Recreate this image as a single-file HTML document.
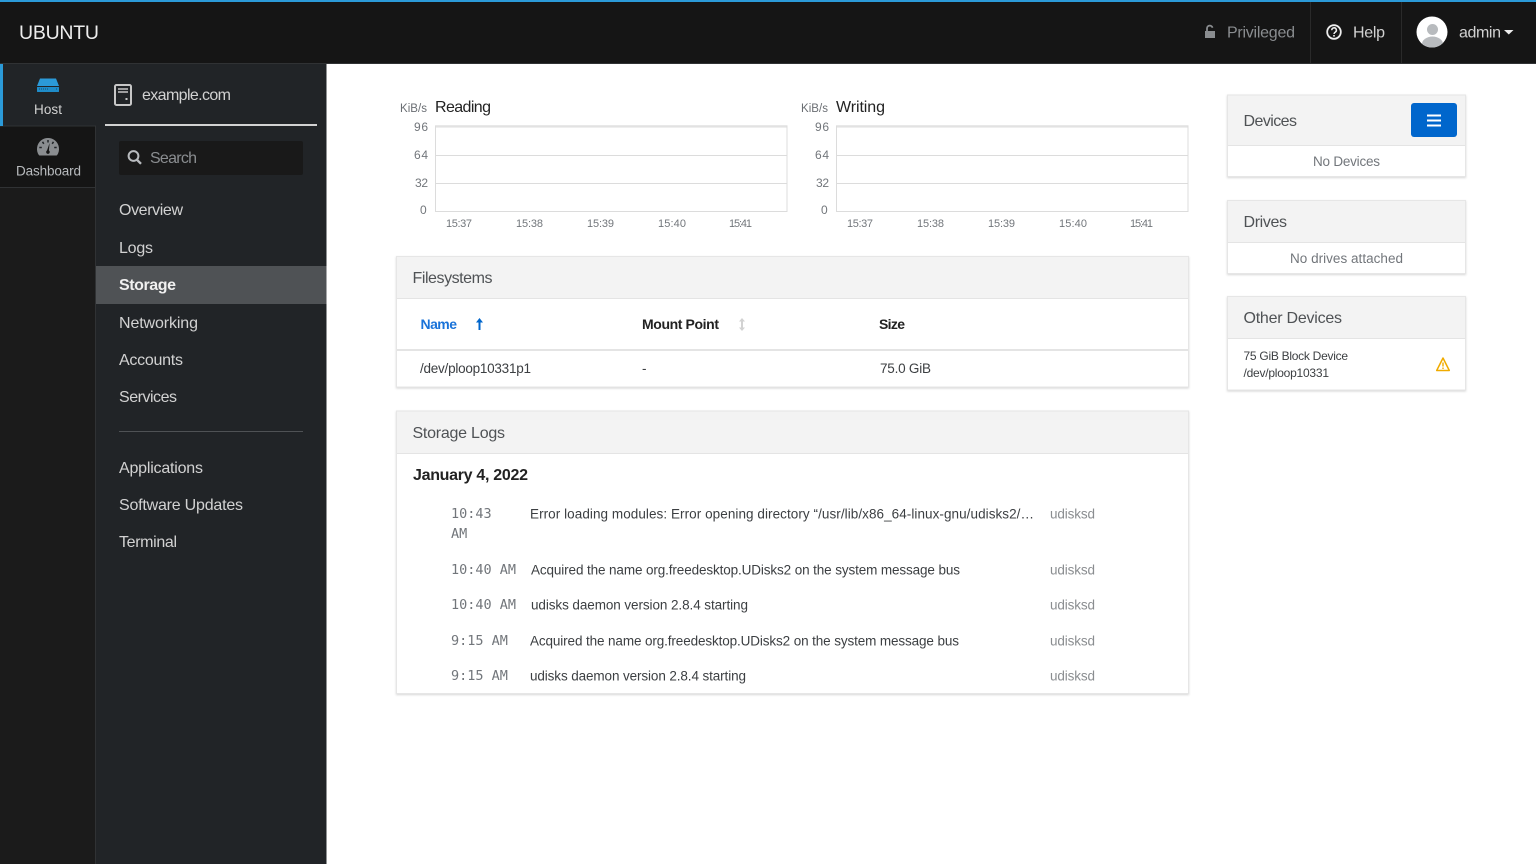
<!DOCTYPE html>
<html><head><meta charset="utf-8"><title>Storage - UBUNTU</title>
<style>
html,body{margin:0;padding:0;background:#fff;width:1536px;height:864px;overflow:hidden}
svg{display:block}
text{font-family:"Liberation Sans",sans-serif;white-space:pre}
.m{font-family:"DejaVu Sans Mono",monospace;font-size:13.500px;fill:#72767b}
.n{font-size:16px;fill:#d2d2d2}
.h{font-size:16px;fill:#4f5255}
.ax{font-size:12px;fill:#72767b}
.tm{font-size:11px;fill:#72767b}
.l{font-size:13.5px;fill:#3c3f42}
.d{font-size:13.5px;fill:#8a8d90}
.c{fill:#fff;stroke:#e6e6e6;stroke-width:1}
.ch{fill:#f3f3f3}
.ln{fill:#e4e4e4}
</style></head><body>
<svg width="1536" height="864" viewBox="0 0 1536 864" xmlns="http://www.w3.org/2000/svg">
<defs>
<filter id="s" x="-2%" y="-5%" width="104%" height="112%"><feDropShadow dx="0" dy="1" stdDeviation="1" flood-color="#000" flood-opacity=".16"/></filter>
</defs>
<rect width="1536" height="864" fill="#fff"/>
<!-- top bar -->
<rect width="1536" height="64" fill="#151515"/>
<rect width="1536" height="2" fill="#2b9ad8"/>
<rect y="63" width="1536" height="1" fill="#303234"/>
<rect x="1310" y="2" width="1" height="61" fill="#2a2a2a"/>
<rect x="1401" y="2" width="1" height="61" fill="#2a2a2a"/>
<text x="19" y="39" font-size="19.500" fill="#ededed" textLength="80">UBUNTU</text>
<path d="M1205 31h10v7h-10z" fill="#8a8d90"/>
<path d="M1207 31v-2.500a2.800 2.800 0 0 1 5.500-.8" fill="none" stroke="#8a8d90" stroke-width="1.800"/>
<text x="1227" y="37.500" font-size="16" fill="#8a8d90" textLength="68">Privileged</text>
<circle cx="1334" cy="32" r="6.800" fill="none" stroke="#ededed" stroke-width="1.800"/>
<path d="M1331.800 30.200a2.300 2.300 0 1 1 3.500 1.900c-.9.6-1.300 1-1.300 1.900" fill="none" stroke="#ededed" stroke-width="1.500"/>
<rect x="1333.200" y="35" width="1.600" height="1.600" fill="#ededed"/>
<text x="1353" y="37.500" font-size="16" fill="#d2d2d2" textLength="32">Help</text>
<circle cx="1432" cy="32" r="15.500" fill="#fff"/>
<clipPath id="av"><circle cx="1432" cy="32" r="15.500"/></clipPath>
<g clip-path="url(#av)" fill="#b8bbbe"><circle cx="1432.500" cy="29.500" r="5.500"/><ellipse cx="1432.500" cy="44" rx="10.500" ry="7.500"/></g>
<text x="1459" y="37.500" font-size="16" fill="#d2d2d2" textLength="42">admin</text>
<path d="M1504 30h9.500l-4.700 4.500z" fill="#ededed"/>
<!-- sidebars -->
<rect x="0" y="64" width="96" height="800" fill="#1b1b1b"/>
<rect x="0" y="64" width="96" height="62" fill="#212427"/>
<rect x="0" y="126" width="95" height="61" fill="#151515"/>
<rect x="0" y="125.500" width="96" height="1" fill="#303234"/>
<rect x="0" y="187" width="95" height="1" fill="#303234"/>
<rect x="95" y="126" width="1" height="738" fill="#303234"/>
<rect x="0" y="64" width="3" height="62" fill="#2b9ad8"/>
<rect x="96" y="64" width="230.500" height="800" fill="#212427"/>
<path d="M40 78.500h16l3 7.500h-22z" fill="#2b9ad8"/>
<rect x="37" y="87" width="22" height="5" rx=".5" fill="#1f8cc9"/>
<path d="M39 89h10M56 89h1.500" stroke="#0d4f78" stroke-width="1" stroke-dasharray="1 1"/>
<text x="34" y="114" font-size="13.500" fill="#d2d2d2" textLength="28">Host</text>
<path d="M38.800 155a11 11 0 1 1 18.400 0c-.3.400-.6.500-1 .5h-16.400c-.4 0-.7-.1-1-.5z" fill="#8a8d90"/>
<path d="M48 140v2.500M42.500 141.800l1.300 2M53.500 141.800l-1.300 2M39.300 147.500h2.500M54.200 147.500h2.500" stroke="#212427" stroke-width="1.500"/>
<path d="M49.600 143l-.7 7.500a1.800 1.800 0 1 1-1.900 0z" fill="#151515"/>
<text x="16" y="175.500" font-size="13.500" fill="#b8bbbe" textLength="65">Dashboard</text>
<rect x="115" y="85" width="16" height="20" rx="1.500" fill="none" stroke="#c7c7c7" stroke-width="2"/>
<path d="M118 89h10M118 92h10" stroke="#c7c7c7" stroke-width="1.500"/>
<rect x="125.500" y="98" width="2" height="2" fill="#c7c7c7"/>
<text x="142" y="100" class="n" textLength="89">example.com</text>
<rect x="105" y="124" width="212" height="2" fill="#d2d2d2"/>
<rect x="119" y="141" width="184" height="34" rx="2" fill="#191919"/>
<circle cx="133.500" cy="156" r="4.900" fill="none" stroke="#b8bbbe" stroke-width="2"/>
<path d="M137 159.800l4 4" stroke="#b8bbbe" stroke-width="2.400"/>
<text x="150" y="163" font-size="16" fill="#8a8d90" textLength="47">Search</text>
<rect x="96" y="266" width="230.500" height="38" fill="#4f5255"/>
<text x="119" y="215" class="n" textLength="64">Overview</text>
<text x="119" y="253" class="n" textLength="34">Logs</text>
<text x="119" y="290" font-size="16" font-weight="700" fill="#f0f0f0" textLength="57">Storage</text>
<text x="119" y="328" class="n" textLength="79">Networking</text>
<text x="119" y="365" class="n" textLength="64">Accounts</text>
<text x="119" y="402" class="n" textLength="58">Services</text>
<rect x="119" y="431" width="184" height="1" fill="#4f5255"/>
<text x="119" y="473" class="n" textLength="84">Applications</text>
<text x="119" y="510" class="n" textLength="124">Software Updates</text>
<text x="119" y="547" class="n" textLength="58">Terminal</text>
<!-- chart 1 -->
<g>
<text x="400" y="112" font-size="11.500" fill="#6a6e73" textLength="27">KiB/s</text>
<text x="435" y="112" font-size="16" fill="#222" textLength="56">Reading</text>
<rect x="435" y="125" width="352.500" height="2" fill="#e8e8e8"/>
<path d="M435.500 126v85.500M787 126v85.500M435 127h352.500M435 155.500h352.500M435 183.500h352.500M435 211.500h352.500" stroke="#dcdcdc" fill="none"/>
<text x="414" y="131" class="ax" textLength="14">96</text>
<text x="414" y="159" class="ax" textLength="14">64</text>
<text x="415" y="187" class="ax" textLength="13">32</text>
<text x="420" y="214" class="ax" textLength="8">0</text>
<text x="446" y="227" class="tm" textLength="26">15:37</text>
<text x="516" y="227" class="tm" textLength="27">15:38</text>
<text x="587" y="227" class="tm" textLength="27">15:39</text>
<text x="658" y="227" class="tm" textLength="28">15:40</text>
<text x="729" y="227" class="tm" textLength="23">15:41</text>
</g>
<!-- chart 2 -->
<g>
<text x="801" y="112" font-size="11.500" fill="#6a6e73" textLength="27">KiB/s</text>
<text x="836" y="112" font-size="16" fill="#222" textLength="49">Writing</text>
<rect x="836" y="125" width="352.500" height="2" fill="#e8e8e8"/>
<path d="M836.500 126v85.500M1188 126v85.500M836 127h352.500M836 155.500h352.500M836 183.500h352.500M836 211.500h352.500" stroke="#dcdcdc" fill="none"/>
<text x="815" y="131" class="ax" textLength="14">96</text>
<text x="815" y="159" class="ax" textLength="14">64</text>
<text x="816" y="187" class="ax" textLength="13">32</text>
<text x="821" y="214" class="ax" textLength="8">0</text>
<text x="847" y="227" class="tm" textLength="26">15:37</text>
<text x="917" y="227" class="tm" textLength="27">15:38</text>
<text x="988" y="227" class="tm" textLength="27">15:39</text>
<text x="1059" y="227" class="tm" textLength="28">15:40</text>
<text x="1130" y="227" class="tm" textLength="23">15:41</text>
</g>
<!-- filesystems -->
<rect x="396.500" y="256.500" width="792" height="130.500" class="c" filter="url(#s)"/>
<rect x="397" y="257" width="791" height="41" class="ch"/>
<rect x="397" y="298" width="791" height="1" class="ln"/>
<text x="412.500" y="283" class="h" textLength="80">Filesystems</text>
<text x="420.500" y="329" font-size="14" font-weight="700" fill="#1a73d9" textLength="36.500">Name</text>
<path d="M479.500 318l3.500 4.500h-2.500v7.500h-2v-7.500h-2.500z" fill="#0066cc"/>
<text x="642" y="329" font-size="14" font-weight="700" fill="#222" textLength="77">Mount Point</text>
<path d="M742 318l3 3.500h-2v6h2l-3 3.500-3-3.500h2v-6h-2z" fill="#d2d2d2"/>
<text x="879" y="329" font-size="14" font-weight="700" fill="#222" textLength="26">Size</text>
<rect x="397" y="349" width="791" height="2" class="ln"/>
<text x="420" y="373" class="l" textLength="111">/dev/ploop10331p1</text>
<text x="642" y="373" class="l" textLength="6">-</text>
<text x="880" y="373" class="l" textLength="51">75.0 GiB</text>
<!-- logs -->
<rect x="396.500" y="411" width="792" height="282.500" class="c" filter="url(#s)"/>
<rect x="397" y="411.500" width="791" height="41.500" class="ch"/>
<rect x="397" y="453" width="791" height="1" class="ln"/>
<text x="412.500" y="438" class="h" textLength="92.500">Storage Logs</text>
<text x="413" y="480" font-size="16" font-weight="700" fill="#222" textLength="115">January 4, 2022</text>
<text x="451" y="518" class="m">10:43</text>
<text x="451" y="538" class="m">AM</text>
<text x="451" y="574" class="m">10:40 AM</text>
<text x="451" y="609" class="m">10:40 AM</text>
<text x="451" y="645" class="m">9:15 AM</text>
<text x="451" y="680" class="m">9:15 AM</text>
<text x="530" y="518.500" class="l" textLength="504">Error loading modules: Error opening directory “/usr/lib/x86_64-linux-gnu/udisks2/…</text>
<text x="531" y="574.500" class="l" textLength="429">Acquired the name org.freedesktop.UDisks2 on the system message bus</text>
<text x="531" y="609.500" class="l" textLength="217">udisks daemon version 2.8.4 starting</text>
<text x="530" y="645.500" class="l" textLength="429">Acquired the name org.freedesktop.UDisks2 on the system message bus</text>
<text x="530" y="680.500" class="l" textLength="216">udisks daemon version 2.8.4 starting</text>
<text x="1050" y="518.500" class="d" textLength="45">udisksd</text>
<text x="1050" y="574.500" class="d" textLength="45">udisksd</text>
<text x="1050" y="609.500" class="d" textLength="45">udisksd</text>
<text x="1050" y="645.500" class="d" textLength="45">udisksd</text>
<text x="1050" y="680.500" class="d" textLength="45">udisksd</text>
<!-- devices -->
<rect x="1227.500" y="95" width="238" height="81.500" class="c" filter="url(#s)"/>
<rect x="1228" y="95.500" width="237" height="49.500" class="ch"/>
<rect x="1228" y="145" width="237" height="1" class="ln"/>
<text x="1243.500" y="126" class="h" textLength="53.500">Devices</text>
<rect x="1411" y="103" width="46" height="34" rx="3" fill="#0066cc"/>
<path d="M1427 115.500h14M1427 120.500h14M1427 125.500h14" stroke="#fff" stroke-width="2"/>
<text x="1313" y="166" class="d" style="fill:#72767b" textLength="67">No Devices</text>
<!-- drives -->
<rect x="1227.500" y="200.500" width="238" height="73" class="c" filter="url(#s)"/>
<rect x="1228" y="201" width="237" height="41" class="ch"/>
<rect x="1228" y="242" width="237" height="1" class="ln"/>
<text x="1243.500" y="227" class="h" textLength="43.500">Drives</text>
<text x="1290" y="263" class="d" style="fill:#72767b" textLength="113">No drives attached</text>
<!-- other -->
<rect x="1227.500" y="296.500" width="238" height="93.500" class="c" filter="url(#s)"/>
<rect x="1228" y="297" width="237" height="41" class="ch"/>
<rect x="1228" y="338" width="237" height="1" class="ln"/>
<text x="1243.500" y="323" class="h" textLength="98.500">Other Devices</text>
<text x="1243.500" y="360" font-size="12" fill="#3c3f42" textLength="104.500">75 GiB Block Device</text>
<text x="1243.500" y="377" font-size="12" fill="#3c3f42" textLength="85.500">/dev/ploop10331</text>
<path d="M1443 358l6.300 12.500h-12.600z" fill="none" stroke="#f0ab00" stroke-width="1.500" stroke-linejoin="round"/>
<path d="M1443 362.500v4M1443 367.500v1.500" stroke="#f0ab00" stroke-width="1.400"/>
</svg>
</body></html>
